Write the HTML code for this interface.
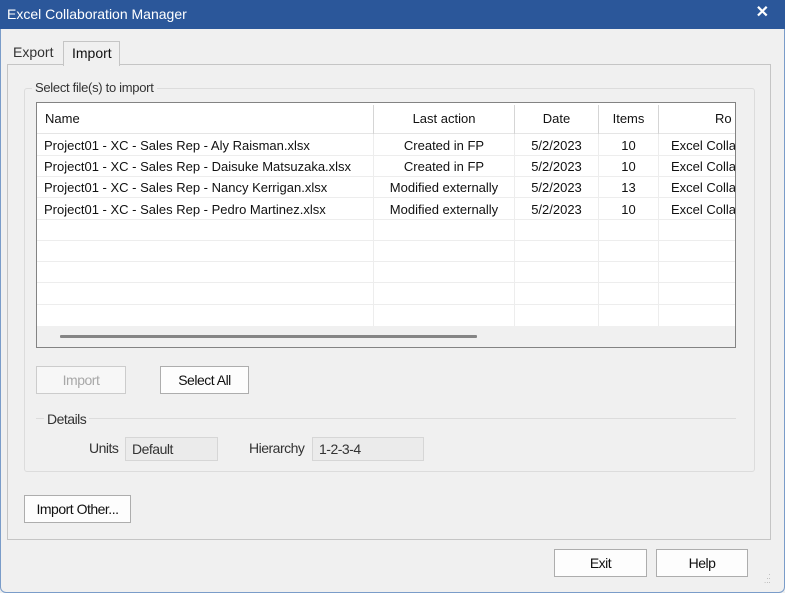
<!DOCTYPE html>
<html><head><style>
*{box-sizing:border-box;margin:0;padding:0}
body{width:785px;height:593px;overflow:hidden;background:#f0f0f0;font-family:"Liberation Sans",sans-serif;font-size:13px;color:#111;position:relative}
.a{position:absolute}
.title{left:0;top:0;width:785px;height:29px;background:#2b579a;color:#fff;font-size:14px;line-height:29px;padding-left:7px}
.btn{position:absolute;background:#fdfdfd;border:1px solid #adadad;text-align:center;font-size:14px;letter-spacing:-0.5px}
.fld{position:absolute;background:#ebebeb;border:1px solid #d6d6d6;font-size:14px;letter-spacing:-0.5px;padding-left:6px;line-height:22px;color:#333}
.hl{position:absolute;height:1px;background:#ededed}
.vl{position:absolute;width:1px;background:#ededed}
.hd{position:absolute;top:0;height:31px;line-height:31px;font-size:13px}
.r{position:absolute;font-size:13px;white-space:nowrap}
</style></head><body>
<div class="a title">Excel Collaboration Manager<span class="a" style="right:16px;top:-2px;font-size:16px;font-weight:bold">✕</span></div>
<div class="a" style="left:0;top:29px;width:785px;height:564px;border:1px solid #7a9cc9;border-top:none;border-radius:0 0 6px 6px"></div>
<!-- tab pane -->
<div class="a" style="left:7px;top:64px;width:764px;height:476px;border:1px solid #c5c5c5;background:#f0f0f0"></div>
<div class="a" style="left:13px;top:44px;font-size:14px;color:#333">Export</div>
<div class="a" style="left:63px;top:41px;width:57px;height:25px;background:#f0f0f0;border:1px solid #c5c5c5;border-bottom:none;font-size:14px;padding:3px 0 0 8px">Import</div>
<!-- group box -->
<div class="a" style="left:24px;top:88px;width:731px;height:384px;border:1px solid #dcdcdc;border-radius:3px"></div>
<div class="a" style="left:32px;top:80px;background:#f0f0f0;padding:0 3px;font-size:13px;color:#333;letter-spacing:-0.3px">Select file(s) to import</div>
<!-- table -->
<div class="a" style="left:36px;top:102px;width:700px;height:246px;border:1px solid #838383;background:#fff;overflow:hidden">
 <div class="a" style="left:0;top:0;width:700px;height:31px;background:#fff;border-bottom:1px solid #e5e5e5"></div>
 <div class="vl" style="left:336px;top:2px;height:29px;background:#d5d5d5"></div>
 <div class="vl" style="left:477px;top:2px;height:29px;background:#d5d5d5"></div>
 <div class="vl" style="left:561px;top:2px;height:29px;background:#d5d5d5"></div>
 <div class="vl" style="left:621px;top:2px;height:29px;background:#d5d5d5"></div>
 <div class="hd" style="left:8px">Name</div>
 <div class="hd" style="left:337px;width:140px;text-align:center">Last action</div>
 <div class="hd" style="left:478px;width:83px;text-align:center">Date</div>
 <div class="hd" style="left:562px;width:59px;text-align:center">Items</div>
 <div class="hd" style="left:678px">Ro</div>
 <div class="vl" style="left:336px;top:31px;height:192px"></div>
 <div class="vl" style="left:477px;top:31px;height:192px"></div>
 <div class="vl" style="left:561px;top:31px;height:192px"></div>
 <div class="vl" style="left:621px;top:31px;height:192px"></div>
 <div class="hl" style="left:0;top:52px;width:700px"></div>
 <div class="hl" style="left:0;top:73px;width:700px"></div>
 <div class="hl" style="left:0;top:94px;width:700px"></div>
 <div class="hl" style="left:0;top:116px;width:700px"></div>
 <div class="hl" style="left:0;top:137px;width:700px"></div>
 <div class="hl" style="left:0;top:158px;width:700px"></div>
 <div class="hl" style="left:0;top:179px;width:700px"></div>
 <div class="hl" style="left:0;top:201px;width:700px"></div>
 <div class="a" style="left:0;top:223px;width:700px;height:23px;background:#f0f0f0"></div>
 <div class="a" style="left:23px;top:232px;width:417px;height:3px;background:#858585;border-radius:1px"></div>
 <div class="r" style="left:7px;top:35px">Project01 - XC - Sales Rep - Aly Raisman.xlsx</div>
 <div class="r" style="left:7px;top:56px">Project01 - XC - Sales Rep - Daisuke Matsuzaka.xlsx</div>
 <div class="r" style="left:7px;top:77px">Project01 - XC - Sales Rep - Nancy Kerrigan.xlsx</div>
 <div class="r" style="left:7px;top:99px">Project01 - XC - Sales Rep - Pedro Martinez.xlsx</div>
 <div class="r" style="left:337px;width:140px;text-align:center;top:35px">Created in FP</div>
 <div class="r" style="left:337px;width:140px;text-align:center;top:56px">Created in FP</div>
 <div class="r" style="left:337px;width:140px;text-align:center;top:77px">Modified externally</div>
 <div class="r" style="left:337px;width:140px;text-align:center;top:99px">Modified externally</div>
 <div class="r" style="left:478px;width:83px;text-align:center;top:35px">5/2/2023</div>
 <div class="r" style="left:478px;width:83px;text-align:center;top:56px">5/2/2023</div>
 <div class="r" style="left:478px;width:83px;text-align:center;top:77px">5/2/2023</div>
 <div class="r" style="left:478px;width:83px;text-align:center;top:99px">5/2/2023</div>
 <div class="r" style="left:562px;width:59px;text-align:center;top:35px">10</div>
 <div class="r" style="left:562px;width:59px;text-align:center;top:56px">10</div>
 <div class="r" style="left:562px;width:59px;text-align:center;top:77px">13</div>
 <div class="r" style="left:562px;width:59px;text-align:center;top:99px">10</div>
 <div class="r" style="left:634px;top:35px">Excel Collab</div>
 <div class="r" style="left:634px;top:56px">Excel Collab</div>
 <div class="r" style="left:634px;top:77px">Excel Collab</div>
 <div class="r" style="left:634px;top:99px">Excel Collab</div>
</div>
<div class="btn" style="left:36px;top:366px;width:90px;height:28px;line-height:26px;color:#a8a8a8;background:#f7f7f7;border-color:#ccc">Import</div>
<div class="btn" style="left:160px;top:366px;width:89px;height:28px;line-height:26px">Select All</div>
<div class="a" style="left:36px;top:418px;width:700px;height:1px;background:#dcdcdc"></div>
<div class="a" style="left:44px;top:411px;background:#f0f0f0;padding:0 3px;font-size:14px;letter-spacing:-0.5px;color:#333">Details</div>
<div class="a" style="left:89px;top:440px;font-size:14px;letter-spacing:-0.5px;color:#333">Units</div>
<div class="fld" style="left:125px;top:437px;width:93px;height:24px">Default</div>
<div class="a" style="left:249px;top:440px;font-size:14px;letter-spacing:-0.5px;color:#333">Hierarchy</div>
<div class="fld" style="left:312px;top:437px;width:112px;height:24px">1-2-3-4</div>
<div class="btn" style="left:24px;top:495px;width:107px;height:28px;line-height:26px">Import Other...</div>
<div class="btn" style="left:554px;top:549px;width:93px;height:28px;line-height:26px">Exit</div>
<div class="btn" style="left:656px;top:549px;width:92px;height:28px;line-height:26px">Help</div>
<div class="a" style="left:764px;top:571px;font-size:8px;color:#aaa;line-height:4px">&nbsp;&nbsp;.<br>&nbsp;..<br>...</div>
</body></html>
